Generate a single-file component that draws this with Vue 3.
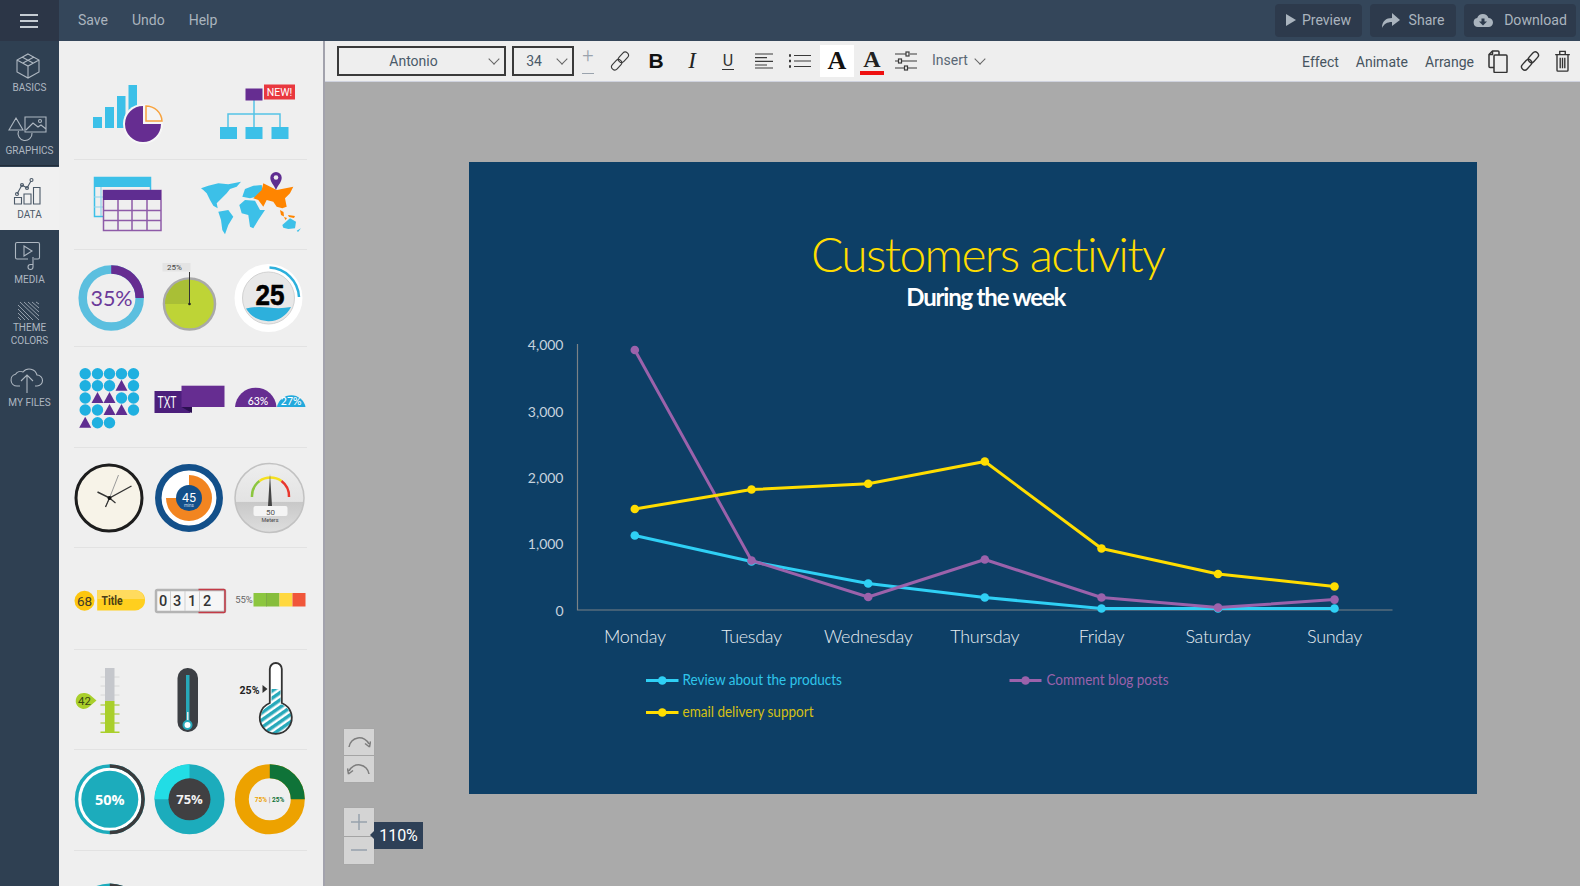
<script setup>
const dayX = [634.3, 751, 867.7, 984.3, 1101, 1217.5, 1334]
const days = ['Monday', 'Tuesday', 'Wednesday', 'Thursday', 'Friday', 'Saturday', 'Sunday']
const ticks = [
  { label: '4,000', y: 350 },
  { label: '3,000', y: 416.5 },
  { label: '2,000', y: 483 },
  { label: '1,000', y: 549 },
  { label: '0', y: 615.5 }
]
const series = [
  { name: 'cyan', color: '#2fd0f5', ys: [535.5, 561.5, 583.5, 597.5, 608.5, 608.5, 608.5] },
  { name: 'purple', color: '#9b62ab', ys: [350, 560.5, 597, 559.5, 597.5, 607.6, 599.6] },
  { name: 'yellow', color: '#ffdd00', ys: [509, 489.5, 483.7, 461.5, 548.5, 574, 586.5] }
].map(s => ({
  ...s,
  points: s.ys.map((y, i) => ({ x: dayX[i], y })),
  line: s.ys.map((y, i) => `${dayX[i]},${y}`).join(' ')
}))
const legend = [
  { text: 'Review about the products', color: '#2fd0f5', label: '#2fc5ea', x1: 645.5, x2: 678, y: 680.5, tx: 682, w: 159.5 },
  { text: 'Comment blog posts', color: '#9b62ab', label: '#9b62ab', x1: 1009, x2: 1041, y: 680.5, tx: 1046, w: 122 },
  { text: 'email delivery support', color: '#ffdd00', label: '#d4c015', x1: 645.5, x2: 678, y: 712.5, tx: 682, w: 131 }
]
const dotCols = [84.7, 97, 109, 121, 133]
const dotRows = [373.7, 385.7, 398, 410, 422.7]
const dotPattern = ['ccccc', 'cccTc', 'cTTcc', 'ccTTc', 'Tcc']
const dots = dotPattern.flatMap((row, r) =>
  [...row].map((kind, c) => ({ kind, x: dotCols[c], y: dotRows[r], key: `${r}-${c}` }))
)
const menu = ['Save', 'Undo', 'Help']
const counter = [
  { d: '0', x: 162.7 },
  { d: '3', x: 176.7 },
  { d: '1', x: 191.7 },
  { d: '2', x: 206.7 }
]
</script>

<template>
  <div class="app">
    <header class="topbar">
      <button class="burger" aria-label="Menu"><span></span><span></span><span></span></button>
      <nav class="menu"><a v-for="m in menu" :key="m">{{ m }}</a></nav>
      <div class="actions">
        <button class="action preview">
          <svg width="10" height="12" viewBox="0 0 10 12"><path d="M0 0 10 6 0 12Z" fill="#aab4be" /></svg>
          Preview
        </button>
        <button class="action share">
          <svg width="18" height="15" viewBox="0 0 18 15"><path d="M0 15C0 8 4 5 10 5V0l8 7-8 6V9C5 9 2 11 0 15Z" fill="#aab4be" /></svg>
          Share
        </button>
        <button class="action download">
          <svg width="20" height="15" viewBox="0 0 20 15">
            <path d="M5 14a4.500 4.500 0 0 1-.8-8.900A6 6 0 0 1 15.500 5 4.500 4.500 0 0 1 15.500 14Z" fill="#aab4be" />
            <path d="M8.500 5.500h3v3H14l-4 4-4-4h2.500Z" fill="#2d3a4c" />
          </svg>
          Download
        </button>
      </div>
    </header>

    <div class="body">
      <aside class="rail">
        <div class="rail-item r-basics">
          <svg width="59" height="30" viewBox="1 50 59 30" class="ri">
            <path d="M29 53l11 6v12l-11 6-11-6V59ZM18 59l11 6 11-6M29 65v12M23 56l11 6M35 56l-11 6" />
          </svg>
          <span>BASICS</span>
        </div>
        <div class="rail-item r-graphics">
          <svg width="59" height="31" viewBox="1 112 59 31" class="ri">
            <path d="M17 117l7 12H10ZM26 116h21v15H26ZM27 129l7-7 5 4 3-2 5 4" />
            <circle cx="41" cy="120" r="1.500" />
            <path d="M19.500 130a7 7 0 1 0 13.500 2" />
          </svg>
          <span>GRAPHICS</span>
        </div>
        <div class="rail-item r-data active">
          <svg width="59" height="31" viewBox="1 176 59 31" class="ri">
            <path d="M15.500 196.500h7v6.500h-7ZM25 193h7v10h-7ZM34.500 186.500h6.500V203h-6.500Z" />
            <path d="M18 193l5-9 5 3 4-7" />
            <circle cx="18" cy="193" r="1.500" /><circle cx="23" cy="184" r="1.500" />
            <circle cx="28" cy="187" r="1.500" /><circle cx="32.500" cy="179" r="1.500" />
          </svg>
          <span>DATA</span>
        </div>
        <div class="rail-item r-media">
          <svg width="59" height="33" viewBox="1 239 59 33" class="ri">
            <path d="M29 258H18a1.500 1.500 0 0 1-1.500-1.500v-13.500a1.500 1.500 0 0 1 1.500-1.500h21a1.500 1.500 0 0 1 1.500 1.500v13.500a1.500 1.500 0 0 1-1.500 1.500h-4" />
            <path d="M25 245l8 5-8 5Z" />
            <path d="M34 256v10a2.500 2.500 0 1 1-2.500-2.500H34" />
          </svg>
          <span>MEDIA</span>
        </div>
        <div class="rail-item r-theme">
          <svg width="59" height="22" viewBox="0 298 59 22" class="ri thin">
            <path d="M18 304l15 15M18 308l11 11M18 312l7 7M18 316l3 3M20 301l19 18M24 301l15 14M28 301l11 10M32 301l7 6M36 301l3 2" />
          </svg>
          <span>THEME<br />COLORS</span>
        </div>
        <div class="rail-item r-files">
          <svg width="59" height="33" viewBox="1 362 59 33" class="ri">
            <path d="M21 385h-3a6 6 0 0 1-1.500-11.800A6 6 0 0 1 24 371a8 8 0 0 1 14 3 5.500 5.500 0 0 1 0 11h-2" />
            <path d="M28 392v-17M22 380l6-6 6 6" />
          </svg>
          <span>MY FILES</span>
        </div>
      </aside>

      <section class="panel">
        <div class="row">
          <div class="duo">
            <svg width="125" height="118" viewBox="65 41 125 118">
              <g fill="#3cc0e8">
                <rect x="93" y="117" width="9" height="11" />
                <rect x="105" y="107" width="9" height="21" />
                <rect x="117" y="96" width="8.500" height="32" />
                <rect x="128.500" y="85" width="8.500" height="32" />
              </g>
              <circle cx="143" cy="124" r="20" fill="#f7f7f7" />
              <path d="M143 124V106A18 18 0 1 0 161 124Z" fill="#662d91" />
              <path d="M146 106A16 16 0 0 1 162 121H146Z" fill="#f4f4f4" stroke="#f7a33f" stroke-width="1.500" />
            </svg>
            <svg width="125" height="118" viewBox="190 41 125 118">
              <path d="M254 100v28M228 128v-14h52v14" fill="none" stroke="#56c3e6" stroke-width="1.500" />
              <rect x="245.500" y="88.500" width="17" height="12" fill="#662d91" />
              <g fill="#3cc0e8">
                <rect x="220" y="127" width="17" height="12" />
                <rect x="245.500" y="127" width="17" height="12" />
                <rect x="271.500" y="127" width="17" height="12" />
              </g>
              <rect x="264" y="84.500" width="31" height="15" fill="#e9383f" />
              <text x="279.500" y="95.500" class="t-new">NEW!</text>
            </svg>
          </div>
        </div>

        <div class="row">
          <div class="duo">
            <svg width="125" height="89" viewBox="65 160 125 89">
              <rect x="94.500" y="177.500" width="56" height="39" fill="none" stroke="#3cc0e8" stroke-width="1.500" />
              <rect x="94" y="177" width="57" height="10" fill="#3cc0e8" />
              <path d="M94 197h10M94 207h10M101 187v29" stroke="#8fd4ec" stroke-width="1.200" fill="none" />
              <rect x="103.500" y="190.500" width="57.500" height="40" fill="#efefef" stroke="#8e5ba8" stroke-width="1.500" />
              <rect x="103" y="190" width="58" height="10" fill="#5f2d91" />
              <path d="M118 200v30M132 200v30M147 200v30M103 210.500h58M103 220.500h58" stroke="#8e5ba8" stroke-width="1.500" fill="none" />
            </svg>
            <svg width="125" height="89" viewBox="190 160 125 89">
              <g fill="#3cc0e8">
                <path d="M201 188.300 208.300 185.700 218.300 183.300 228.300 184.300 241 181.700 236.700 186.700 230 189 226.700 193.300 221.700 198.300 216.700 203.300 217.700 208.300 213.300 205.700 210 200 206.700 193.300 203.300 190Z" />
                <path d="M218.300 211.700 228.300 210 233.300 216.700 228.300 225 225 234.300 222.300 230 221 220Z" />
                <path d="M242.300 196.700 245 189 253.300 185.700 261.700 185 262.700 191.700 256.700 196.700 250 198.300Z" />
                <path d="M239.300 205 245 200 255 200.700 260 210 265 210 258.300 220 253.300 228.300 250 226.700 248.300 215 241.700 213.300Z" />
                <path d="M282.300 225 290 218.300 296 221.700 295 228.300 288.300 229 283.300 227.700Z" />
                <path d="M296.700 230.700 301 228.300 298 232Z" />
              </g>
              <path d="M253.300 198.300 261.700 190 263.300 183.300 276.700 190 293.300 186.700 290 193.300 285 198.300 286.700 206.700 282.300 208.300 276.700 206.700 273.300 201.700 266.700 200 263.300 206.700 258.300 200Z" fill="#ff8500" />
              <path d="M280 210l3.500 2 .5 4.500-3-1.500ZM288 215l7 1-1 2-5-1ZM284 217l3 1-1.500 2Z" fill="#ff8500" />
              <path d="M276 190c-2-5-5.700-8-5.700-12.300a5.700 5.700 0 0 1 11.400 0c0 4.300-3.700 7.300-5.700 12.300Z" fill="#5f2d91" />
              <circle cx="276" cy="177.500" r="2.300" fill="#efefef" />
            </svg>
          </div>
        </div>

        <div class="row">
          <div class="tri">
            <svg width="79" height="96" viewBox="70.500 250 79 96">
              <circle cx="110.700" cy="298" r="28.500" fill="none" stroke="#5bbfdf" stroke-width="8.500" />
              <path d="M110.700 269.500A28.500 28.500 0 0 1 139.200 298" fill="none" stroke="#662d91" stroke-width="8.500" />
              <text x="111" y="305.500" class="t-35">35%</text>
            </svg>
            <svg width="79" height="96" viewBox="149.500 250 79 96">
              <rect x="162" y="263" width="28" height="8.500" fill="#e4e4e4" />
              <text x="174" y="270" class="t-25">25%</text>
              <circle cx="189" cy="304" r="25.500" fill="#bed436" stroke="#a9a9a9" stroke-width="2.500" />
              <path d="M189 304V279.500A24.500 24.500 0 0 0 164.500 304Z" fill="#a9bf36" />
              <path d="M189 272v32" stroke="#333" stroke-width="1" />
              <circle cx="189" cy="304" r="1.300" fill="#222" />
            </svg>
            <svg width="79" height="96" viewBox="228.500 250 79 96">
              <circle cx="268" cy="298" r="34" fill="#fff" />
              <circle cx="268" cy="298" r="26" fill="#e8e8e8" stroke="#d2d2d2" stroke-width="1" />
              <path d="M245.500 308.500Q256 306 268 307.500T290.500 307A25.500 25.500 0 0 1 245.500 308.500Z" fill="#2db0dc" />
              <path d="M269 267.500A31 31 0 0 1 298.500 297" fill="none" stroke="#2db0dc" stroke-width="2.500" />
              <text x="269.500" y="305" class="t-dial" textLength="29" lengthAdjust="spacingAndGlyphs">25</text>
            </svg>
          </div>
        </div>

        <div class="row">
          <div class="tri">
            <svg width="79" height="100" viewBox="70.500 347 79 100">
              <template v-for="d in dots" :key="d.key">
                <circle v-if="d.kind === 'c'" :cx="d.x" :cy="d.y" r="5.700" fill="#1fb0e0" />
                <path v-else :d="`M${d.x} ${d.y - 6}l6 11h-12Z`" fill="#5f2d91" />
              </template>
            </svg>
            <svg width="79" height="100" viewBox="149.500 347 79 100">
              <rect x="154" y="391" width="36" height="22" fill="#4c1f7c" />
              <text x="166.500" y="408" class="t-txt" textLength="19" lengthAdjust="spacingAndGlyphs">TXT</text>
              <rect x="181" y="385.700" width="43" height="21.300" fill="#662d91" />
              <path d="M181 407h10.500v6Z" fill="#2b1050" />
            </svg>
            <svg width="79" height="100" viewBox="228.500 347 79 100">
              <path d="M234.500 407A20.800 20.800 0 0 1 276 407Z" fill="#662d91" />
              <path d="M276.500 407A14.500 14.500 0 0 1 305 407Z" fill="#22a9dc" />
              <text x="257.500" y="405" class="t-semi">63%</text>
              <text x="290.700" y="405" class="t-semi">27%</text>
            </svg>
          </div>
        </div>

        <div class="row">
          <div class="tri">
            <svg width="79" height="99" viewBox="70.500 448 79 99">
              <circle cx="108.500" cy="498" r="33" fill="#f7f3e8" stroke="#1d1d1d" stroke-width="3" />
              <path d="M97 492l12 6 22-12" fill="none" stroke="#333" stroke-width="1.400" />
              <path d="M118 475l-9 23-4 9" fill="none" stroke="#9a9a9a" stroke-width="1" />
              <path d="M109 498l6 5M109 498l-4 9" fill="none" stroke="#333" stroke-width="1.200" />
              <circle cx="109" cy="498" r="2" fill="#111" />
            </svg>
            <svg width="79" height="99" viewBox="149.500 448 79 99">
              <circle cx="188.500" cy="498" r="30.700" fill="#fff" stroke="#13508a" stroke-width="6.500" />
              <path d="M188.500 498V475A23 23 0 1 1 165.500 498Z" fill="#f28521" />
              <circle cx="188.500" cy="498" r="13" fill="#13508a" />
              <text x="188.500" y="502" class="t-45">45</text>
              <text x="188.500" y="507" class="t-mins">mins</text>
            </svg>
            <svg width="79" height="99" viewBox="228.500 448 79 99">
              <defs>
                <linearGradient id="silver" x1="0" y1="0" x2="0" y2="1">
                  <stop offset="0" stop-color="#eeeeee" />
                  <stop offset="0.55" stop-color="#e3e3e3" />
                  <stop offset="0.56" stop-color="#c8c8c8" />
                  <stop offset="1" stop-color="#dedede" />
                </linearGradient>
              </defs>
              <circle cx="269" cy="498" r="34.500" fill="url(#silver)" stroke="#c2c2c2" stroke-width="1.500" />
              <path d="M251.500 497A19 19 0 0 1 259 481" fill="none" stroke="#8cc63f" stroke-width="2.500" />
              <path d="M259 481A19 19 0 0 1 281 481" fill="none" stroke="#f5e020" stroke-width="2.500" />
              <path d="M281 481A19 19 0 0 1 288.500 497" fill="none" stroke="#e8372d" stroke-width="2.500" />
              <path d="M269.500 474l2 32h-4Z" fill="#444" />
              <rect x="253" y="506" width="34" height="10" rx="2" fill="#f4f4f4" />
              <text x="270" y="514.500" class="t-50">50</text>
              <text x="269.500" y="522" class="t-meters">Meters</text>
            </svg>
          </div>
        </div>

        <div class="row">
          <div class="tri">
            <svg width="79" height="101" viewBox="70.500 548 79 101">
              <circle cx="84" cy="600.700" r="10" fill="#fdc60f" />
              <text x="84" y="605.500" class="t-68">68</text>
              <path d="M96.700 590H134a10 10 0 0 1 10.500 10v.5a10 10 0 0 1-10.500 10H96.700Z" fill="#ffcf1e" />
              <path d="M96.700 590H134a10 10 0 0 1 10 9H96.700Z" fill="#ffdb5e" />
              <text x="101" y="604.500" class="t-title" textLength="21" lengthAdjust="spacingAndGlyphs">Title</text>
            </svg>
            <svg width="79" height="101" viewBox="149.500 548 79 101">
              <rect x="155.500" y="590" width="69" height="22" rx="1.500" fill="#f6f6f6" stroke="#b4b4b4" stroke-width="2.500" />
              <path d="M170 591v20M184.500 591v20M199 591v20" stroke="#cfcfcf" stroke-width="1" />
              <path d="M198 589.500h25.500a1 1 0 0 1 1 1v21a1 1 0 0 1-1 1H198" fill="none" stroke="#c43a46" stroke-width="1.500" />
              <text v-for="c in counter" :key="c.d" :x="c.x" y="606" class="t-count">{{ c.d }}</text>
            </svg>
            <svg width="79" height="101" viewBox="228.500 548 79 101">
              <text x="243.500" y="603" class="t-55">55%</text>
              <rect x="253" y="593" width="13" height="13.500" fill="#8cc63f" />
              <rect x="266" y="593" width="13" height="13.500" fill="#86bd3c" />
              <rect x="279" y="593" width="13" height="13.500" fill="#ffd83f" />
              <rect x="292" y="593" width="13" height="13.500" fill="#f0563a" />
              <path d="M266 593v13.500" stroke="#6f9e35" stroke-width="0.700" />
            </svg>
          </div>
        </div>

        <div class="row">
          <div class="tri">
            <svg width="79" height="99" viewBox="70.500 650 79 99">
              <path d="M100 677h19M100 686h19M100 695h19M100 705h19M100 714h19M100 723h19" stroke="#d8d8d8" stroke-width="1" />
              <rect x="104.500" y="668" width="9.500" height="33" fill="#c5c7cc" />
              <rect x="104.500" y="701" width="9.500" height="31" fill="#a9cf2b" />
              <path d="M100 705h19M100 714h19M100 723h19" stroke="#a9cf2b" stroke-width="1" />
              <rect x="100" y="731.500" width="19" height="1.500" fill="#a9cf2b" />
              <path d="M84 693a8 8 0 0 1 5 1.500l7 6-7 6A8 8 0 1 1 84 693Z" fill="#a9cf2b" />
              <text x="84" y="705" class="t-42">42</text>
            </svg>
            <svg width="79" height="99" viewBox="149.500 650 79 99">
              <rect x="177" y="668" width="20.500" height="64" rx="10" fill="#3c3f44" />
              <rect x="185.500" y="675" width="3.500" height="47" fill="#27a9ba" />
              <rect x="186.500" y="712" width="1.500" height="11" fill="#e8e8e8" />
              <circle cx="187" cy="725" r="4" fill="#fff" stroke="#27a9ba" stroke-width="2" />
            </svg>
            <svg width="79" height="99" viewBox="228.500 650 79 99">
              <defs>
                <pattern id="hatch" width="6" height="6" patternUnits="userSpaceOnUse" patternTransform="rotate(-35)">
                  <rect width="6" height="6" fill="#fff" />
                  <rect width="6" height="3.500" fill="#27a9ba" />
                </pattern>
              </defs>
              <path d="M269.300 703V669a6 6 0 0 1 12 0v34a16 16 0 1 1-12 0Z" fill="#fff" />
              <path d="M271 689h9v15a15.500 15.500 0 1 1-9 0Z" fill="url(#hatch)" />
              <path d="M269.300 703V669a6 6 0 0 1 12 0v34a16 16 0 1 1-12 0Z" fill="none" stroke="#333" stroke-width="1.800" />
              <text x="249" y="693.500" class="t-25b">25%</text>
              <path d="M262 685l5 4-5 4Z" fill="#333" />
            </svg>
          </div>
        </div>

        <div class="row">
          <div class="tri">
            <svg width="79" height="100" viewBox="70.500 750 79 100">
              <circle cx="109.300" cy="799.300" r="31.500" fill="#fff" />
              <circle cx="109.300" cy="799.300" r="33.300" fill="none" stroke="#1cacbc" stroke-width="3.500" />
              <path d="M109.300 766A33.300 33.300 0 0 1 109.300 832.600" fill="none" stroke="#3b3b3d" stroke-width="3.500" />
              <circle cx="109.300" cy="799.300" r="28.500" fill="#1cacbc" />
              <text x="109.300" y="804.500" class="t-50p">50%</text>
            </svg>
            <svg width="79" height="100" viewBox="149.500 750 79 100">
              <circle cx="189" cy="799.300" r="35" fill="#1cacbc" />
              <path d="M189 799.300V764.300A35 35 0 0 0 154 799.300Z" fill="#22dde5" />
              <circle cx="189" cy="799.300" r="21" fill="#404042" />
              <text x="189" y="804" class="t-75">75%</text>
            </svg>
            <svg width="79" height="100" viewBox="228.500 750 79 100">
              <circle cx="269.300" cy="799.300" r="28" fill="none" stroke="#eda200" stroke-width="14" />
              <path d="M269.300 771.300A28 28 0 0 1 297.300 799.300" fill="none" stroke="#0f7338" stroke-width="14" />
              <text x="269" y="802" class="t-split"><tspan fill="#eda200">75%</tspan> | <tspan fill="#0f7338">25%</tspan></text>
            </svg>
          </div>
        </div>

        <div class="row last">
          <div class="tri">
            <svg width="79" height="35" viewBox="70.500 851 79 35">
              <circle cx="109.300" cy="918.500" r="33.300" fill="none" stroke="#1cacbc" stroke-width="3.500" />
              <path d="M109.300 885.200A33.300 33.300 0 0 1 125 889" fill="none" stroke="#3b3b3d" stroke-width="3.500" />
            </svg>
          </div>
        </div>
      </section>

      <main class="main">
        <div class="toolbar">
          <div class="select font"><span>Antonio</span><i class="chev"></i></div>
          <div class="select size"><span>34</span><i class="chev"></i></div>
          <div class="stepper"><span class="plus">+</span><span class="minus"></span></div>
          <button class="tool">
            <svg width="22" height="22" viewBox="0 0 24 24" class="ti"><g transform="rotate(-48 12 12)"><rect x="0" y="8.500" width="13" height="7" rx="3.500" /><rect x="11" y="8.500" width="13" height="7" rx="3.500" /></g></svg>
          </button>
          <button class="tool glyph bold">B</button>
          <button class="tool glyph ital">I</button>
          <button class="tool glyph under"><span>U</span></button>
          <button class="tool">
            <svg width="20" height="16" viewBox="0 0 20 16" class="ti"><path d="M1 1h18M1 4.700h12M1 8.300h18M1 12h12M1 15h18" /></svg>
          </button>
          <button class="tool">
            <svg width="24" height="16" viewBox="0 0 24 16" class="ti"><path d="M6 2.500h17M6 8h17M6 13.500h17" /><path d="M1 2.500h2M1 8h2M1 13.500h2" stroke-width="2.400" /></svg>
          </button>
          <button class="tool glyph a-white">A</button>
          <button class="tool glyph a-red"><span>A</span></button>
          <button class="tool sliders">
            <svg width="24" height="20" viewBox="0 0 24 20" class="ti"><path d="M1 3h11M16 3h7M1 10h3M8 10h15M1 17h9M14 17h9" /><rect x="12" y="1" width="3" height="4" /><rect x="4.500" y="8" width="3" height="4" /><rect x="10.500" y="15" width="3" height="4" /></svg>
          </button>
          <div class="insert"><span>Insert</span><i class="chev"></i></div>
          <div class="spacer"></div>
          <a class="tlink">Effect</a>
          <a class="tlink">Animate</a>
          <a class="tlink">Arrange</a>
          <button class="rtool">
            <svg width="20" height="23" viewBox="0 0 20 23" class="ti heavy"><path d="M6 17.500H2a1 1 0 0 1-1-1V4.500L4.500 1H10a1 1 0 0 1 1 1v3" /><path d="M1 4.500h3.500V1" /><path d="M7 5h11a1 1 0 0 1 1 1v15.500a1 1 0 0 1-1 1H7a1 1 0 0 1-1-1V6a1 1 0 0 1 1-1Z" /></svg>
          </button>
          <button class="rtool">
            <svg width="22" height="22" viewBox="0 0 24 24" class="ti heavy"><g transform="rotate(-48 12 12)"><rect x="0" y="8.500" width="13" height="7" rx="3.500" /><rect x="11" y="8.500" width="13" height="7" rx="3.500" /></g></svg>
          </button>
          <button class="rtool">
            <svg width="17" height="22" viewBox="0 0 18 24" class="ti heavy"><path d="M1 5h16M6 5V1.500h6V5M3 5v17a1 1 0 0 0 1 1h10a1 1 0 0 0 1-1V5M6.500 8.500v11.500M9 8.500v11.500M11.500 8.500v11.500" /></svg>
          </button>
        </div>

        <div class="stage">
          <article class="slide">
            <header class="slide-head">
              <h1>Customers activity</h1>
              <h2>During the week</h2>
            </header>
            <svg class="chart" width="1008.500" height="474" viewBox="468.500 320 1008.500 474">
              <path d="M577 344V610H1392" fill="none" stroke="#7b8286" stroke-width="1.200" />
              <text v-for="t in ticks" :key="t.label" x="563" :y="t.y" class="tick">{{ t.label }}</text>
              <text v-for="(d, i) in days" :key="d" :x="dayX[i]" y="643" class="day">{{ d }}</text>
              <g v-for="s in series" :key="s.name">
                <polyline :points="s.line" fill="none" :stroke="s.color" stroke-width="3" stroke-linejoin="round" />
                <circle v-for="p in s.points" :key="p.x" :cx="p.x" :cy="p.y" r="4.300" :fill="s.color" />
              </g>
              <g v-for="l in legend" :key="l.text">
                <path :d="`M${l.x1} ${l.y}H${l.x2}`" :stroke="l.color" stroke-width="3" />
                <circle :cx="(l.x1 + l.x2) / 2" :cy="l.y" r="4.300" :fill="l.color" />
                <text :x="l.tx" :y="l.y + 4.500" :fill="l.label" :textLength="l.w" lengthAdjust="spacingAndGlyphs" class="legend">{{ l.text }}</text>
              </g>
            </svg>
          </article>

          <div class="history">
            <button class="ctl">
              <svg width="24" height="18" viewBox="0 0 24 18" class="ci"><path d="M2 14A10.500 10.500 0 0 1 22 11M22.500 14l-4.500-3.500M22.500 14l1-5.500" /></svg>
            </button>
            <button class="ctl">
              <svg width="24" height="18" viewBox="0 0 24 18" class="ci"><path d="M22 14A10.500 10.500 0 0 0 2 11M1.500 14l4.500-3.500M1.500 14l-1-5.500" /></svg>
            </button>
          </div>
          <div class="zoom">
            <button class="ctl tall">
              <svg width="18" height="18" viewBox="0 0 18 18" class="ci blue"><path d="M9 1v16M1 9h16" /></svg>
            </button>
            <button class="ctl tall">
              <svg width="18" height="18" viewBox="0 0 18 18" class="ci blue"><path d="M1 9h16" /></svg>
            </button>
            <div class="zoom-tip">110%</div>
          </div>
        </div>
      </main>
    </div>
  </div>
</template>

<style>
html, body { margin: 0; background: #aaaaaa; }
</style>

<style scoped>
.app { width: 1580px; height: 886px; overflow: hidden; display: flex; flex-direction: column; font-family: Roboto, "Liberation Sans", sans-serif; }
button { border: 0; background: none; padding: 0; font: inherit; color: inherit; }
.topbar { height: 41px; flex: none; display: flex; align-items: center; background: #34465a; color: #aab4be; }
.burger { width: 59px; height: 41px; background: #2c3647; display: flex; flex-direction: column; align-items: center; justify-content: center; gap: 4px; padding-right: 1px; box-sizing: border-box; }
.burger span { width: 18px; height: 2px; background: #c5ccd3; }
.menu { display: flex; gap: 24px; margin: -1px 0 0 19px; font-size: 14px; }
.actions { margin-left: auto; display: flex; gap: 8px; padding-right: 4px; }
.action { height: 33px; border-radius: 4px; background: #2d3a4c; color: #aab4be; font-size: 14.100px; display: flex; align-items: center; justify-content: center; gap: 6px; margin-top: -1px; }
.preview { width: 87px; }
.share { width: 86px; gap: 9px; }
.download { width: 112px; gap: 11px; }

.body { flex: 1; display: flex; min-height: 0; }
.rail { width: 59px; flex: none; background: #2f4052; color: #aeb7c1; font-size: 10px; text-align: center; }
.rail-item { padding-top: 10px; line-height: 13px; box-sizing: border-box; }
.rail-item svg { display: block; }
.ri { fill: none; stroke: #aeb7c1; stroke-width: 1.100; }
.ri.thin { stroke-width: 0.800; }
.r-basics { height: 62px; }
.r-graphics { height: 63px; border-bottom: 1px solid #222d3a; }
.r-data { height: 63px; margin-top: 1px; }
.active { background: #f0f0f0; color: #4c5a69; }
.active .ri { stroke: #4c5a69; }
.r-media { height: 60px; }
.r-theme { height: 62px; padding-top: 9px; }
.r-files { height: 60px; padding-top: 11px; }

.panel { width: 264px; flex: none; box-sizing: content-box; background: #efefef; border-right: 2px solid #a2a2ac; overflow: hidden; }
.row { margin: 0 16px 0 15px; border-bottom: 1px solid #e2e2e2; }
.row.last { border-bottom: 0; }
.row svg { display: block; overflow: visible; }
.duo { display: grid; grid-template-columns: 125px 125px; margin-left: -9px; width: 250px; }
.tri { display: grid; grid-template-columns: 79px 79px 79px; margin-left: -3.500px; width: 237px; }
text { font-family: Roboto, "Liberation Sans", sans-serif; text-anchor: middle; }
.t-new { fill: #fff; font-size: 10.500px; }
.t-35 { fill: #6b3a9a; font-size: 21.500px; font-family: Lato, sans-serif; }
.t-25 { fill: #444; font-size: 8px; }
.t-dial { fill: #000; stroke: #000; stroke-width: 0.600px; font-size: 30px; font-weight: 700; font-family: "Liberation Sans", sans-serif; }
.t-txt { fill: #fff; font-size: 16px; font-weight: 400; font-family: "Liberation Sans", sans-serif; }
.t-semi { fill: #fff; font-size: 10.500px; font-weight: 500; font-family: Lato, sans-serif; }
.t-45 { fill: #fff; font-size: 12.500px; }
.t-mins { fill: #cfdde9; font-size: 4.500px; }
.t-50 { fill: #555; font-size: 8px; }
.t-meters { fill: #444; font-size: 5.500px; }
.t-68 { fill: #3c3a2a; font-size: 13.500px; }
.t-title { fill: #4a3f16; font-size: 12px; font-weight: 700; text-anchor: start; }
.t-count { fill: #333; font-size: 14.500px; font-weight: 500; }
.t-55 { fill: #666; font-size: 9.500px; }
.t-42 { fill: #3a4a12; font-size: 11.500px; }
.t-25b { fill: #222; font-size: 10.500px; font-weight: 700; }
.t-50p { fill: #fff; font-size: 14.500px; font-weight: 700; font-family: "Open Sans", sans-serif; }
.t-75 { fill: #f2f2f2; font-size: 13px; font-weight: 700; font-family: "Open Sans", sans-serif; }
.t-split { fill: #888; font-size: 6.500px; font-weight: 700; }

.main { flex: 1; min-width: 0; display: flex; flex-direction: column; }
.toolbar { height: 41px; flex: none; box-sizing: border-box; display: flex; align-items: center; background: #eeeeee; border-bottom: 1px solid #cfd2de; padding: 0 2px 0 12px; color: #4a5a6a; font-size: 14px; }
.select { box-sizing: border-box; height: 30px; border: 2px solid #3a3a3a; display: flex; align-items: center; position: relative; justify-content: center; margin-right: 6px; color: #4a5a6a; }
.font { width: 169px; padding-right: 16px; }
.size { width: 62px; padding-right: 18px; margin-right: 4px; }
.chev { display: block; width: 7px; height: 7px; border-right: 1px solid #666; border-bottom: 1px solid #666; transform: rotate(45deg); }
.select .chev { position: absolute; right: 6px; top: 7px; }
.stepper { width: 20px; height: 30px; position: relative; display: flex; flex-direction: column; align-items: center; color: #9aa3ad; }
.plus { font-size: 20px; font-weight: 300; line-height: 18px; }
.minus { width: 12px; height: 1px; background: #9aa3ad; margin-top: 9px; }
.tool { width: 36px; height: 32px; flex: none; display: flex; align-items: center; justify-content: center; color: #222; }
.stepper + .tool { margin-left: 4px; }
.ti { fill: none; stroke: #3a3a3a; stroke-width: 1.200; }
.ti.heavy { stroke: #333; stroke-width: 1.500; }
.glyph { font-family: "Liberation Sans", sans-serif; }
.bold { font-size: 21px; font-weight: 700; color: #111; }
.ital { font-family: "Liberation Serif", serif; font-style: italic; font-size: 23px; color: #222; }
.under { font-family: Roboto, sans-serif; font-size: 16px; color: #333; }
.under span { border-bottom: 1.500px solid #333; line-height: 17px; padding: 0 1px; }
.a-white { width: 34px; margin-left: 2px; background: #fff; font-family: "Liberation Serif", serif; font-weight: 700; font-size: 26px; color: #111; }
.a-red { font-family: "Liberation Serif", serif; font-weight: 700; font-size: 24px; color: #222; }
.a-red span { border-bottom: 4px solid #ee1010; line-height: 23px; padding: 0 3px; }
.sliders { margin-left: -2px; }
.insert { display: flex; align-items: center; gap: 8px; margin-left: 8px; color: #5a6875; font-size: 14px; margin-top: -2px; }
.insert .chev { margin-top: -3px; }
.spacer { flex: 1; }
.tlink { margin-right: 17px; font-size: 14px; color: #46545f; font-weight: 400; margin-top: 1px; }
.tlink:nth-last-child(4) { margin-right: 8px; }
.rtool { width: 32px; height: 32px; display: flex; align-items: center; justify-content: center; }

.stage { flex: 1; position: relative; background: #aaaaaa; padding: 80px 0 0 143.500px; box-sizing: border-box; min-height: 0; }
.slide { width: 1008.500px; height: 632px; background: #0d3f66; color: #fff; font-family: Lato, sans-serif; }
.slide-head { height: 158px; box-sizing: border-box; padding: 62px 0 0 30px; text-align: center; }
.slide h1 { margin: 0; font-size: 48px; line-height: 60px; font-weight: 300; color: #ffdd00; letter-spacing: -1.700px; }
.slide h2 { margin: -3px 0 0 -4px; font-size: 24px; line-height: 32px; font-weight: 700; color: #fff; letter-spacing: -1.200px; }
.chart { display: block; }
.tick { text-anchor: end; fill: #c7d3de; font-size: 14px; font-family: Lato, sans-serif; }
.day { fill: #e8eef3; font-size: 18px; font-family: Lato, sans-serif; font-weight: 300; letter-spacing: -0.300px; }
.legend { text-anchor: start; font-size: 15px; font-family: Lato, sans-serif; }

.history, .zoom { position: absolute; left: 19px; display: flex; flex-direction: column; gap: 1px; }
.history { top: 647px; }
.zoom { top: 726px; }
.ctl { width: 30px; height: 26px; background: #d4d4d4; box-shadow: 0 0 1px #999; display: flex; align-items: center; justify-content: center; }
.ctl.tall { height: 27.500px; }
.ci { fill: none; stroke: #7d7d7d; stroke-width: 1.500; }
.ci.blue { stroke: #96a1ac; }
.zoom-tip { position: absolute; left: 30px; top: 14px; width: 49px; height: 27px; background: #2e4057; color: #fff; font-size: 16px; line-height: 27px; text-align: center; }
.zoom-tip::before { content: ""; position: absolute; left: -4px; top: 9px; border: 4px solid transparent; border-left: 0; border-right-color: #2e4057; }
</style>
